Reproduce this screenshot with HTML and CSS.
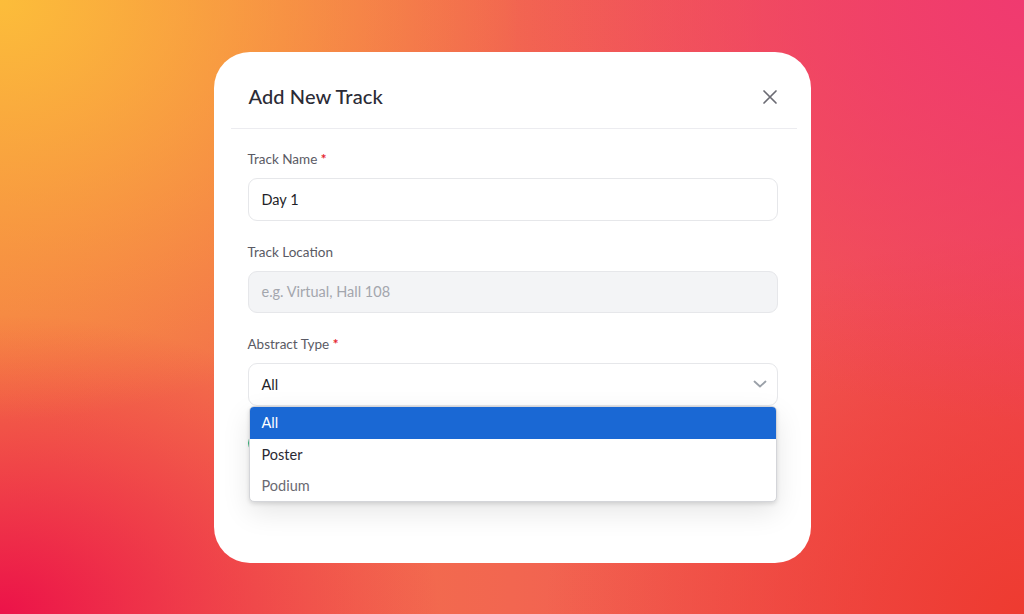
FILE: index.html
```html
<!DOCTYPE html>
<html lang="en">
<head>
<meta charset="utf-8">
<title>Add New Track</title>
<link rel="stylesheet" href="styles.css">
</head>
<body>
<div class="stage">
  <div class="modal">
    <div class="modal-header">
      <h2 class="modal-title">Add New Track</h2>
      <button class="close-btn" aria-label="Close">
        <svg width="16" height="16" viewBox="0 0 16 16"><path d="M2 2 L14 14 M14 2 L2 14" stroke="#6b6b73" stroke-width="1.7" stroke-linecap="round" fill="none"/></svg>
      </button>
    </div>
    <div class="modal-body">
      <div class="field">
        <label class="label">Track Name <span class="req">*</span></label>
        <div class="input">Day 1</div>
      </div>
      <div class="field">
        <label class="label">Track Location</label>
        <div class="input input-muted placeholder">e.g. Virtual, Hall 108</div>
      </div>
      <div class="field field-select">
        <label class="label">Abstract Type <span class="req">*</span></label>
        <div class="input select">
          <span>All</span>
          <svg class="chev" width="14" height="8" viewBox="0 0 14 8"><path d="M1.5 1.5 L7 6.5 L12.5 1.5" stroke="#9aa0a8" stroke-width="1.8" stroke-linecap="round" stroke-linejoin="round" fill="none"/></svg>
        </div>
        <div class="toggle-row">
          <span class="toggle"></span>
          <span class="toggle-label">Active</span>
        </div>
        <ul class="dropdown">
          <li class="opt opt-active">All</li>
          <li class="opt">Poster</li>
          <li class="opt opt-muted">Podium</li>
        </ul>
      </div>
    </div>
  </div>
</div>
</body>
</html>
```

FILE: styles.css
```css
* { box-sizing: border-box; }
html, body { margin: 0; padding: 0; }
body {
  width: 1024px;
  height: 614px;
  overflow: hidden;
  font-family: "Lato", "Open Sans", sans-serif;
  background:
    radial-gradient(ellipse 520px 420px at 0% 0%, #fcbd3a 0%, rgba(252,189,58,0) 100%),
    radial-gradient(ellipse 440px 300px at 0% 100%, #ec1249 0%, rgba(236,18,73,0) 100%),
    radial-gradient(ellipse 520px 420px at 100% 0%, #f03a70 0%, rgba(240,58,112,0) 100%),
    radial-gradient(ellipse 480px 380px at 100% 100%, #ee3b30 0%, rgba(238,59,48,0) 100%),
    linear-gradient(90deg, #f47a46 0%, #f26650 50%, #f04a55 100%);
}
.stage {
  width: 1024px;
  height: 614px;
  display: flex;
  align-items: center;
  justify-content: center;
}
.modal {
  width: 597px;
  height: 511px;
  background: #fff;
  border-radius: 36px;
  display: flex;
  flex-direction: column;
}
.modal-header {
  margin: 0 14px 0 17px;
  height: 77px;
  padding: 13px 18px 0 18px;
  border-bottom: 1px solid #ececf0;
  display: flex;
  align-items: center;
  justify-content: space-between;
}
.modal-title {
  margin: 0;
  font-size: 20px;
  font-weight: 500;
  color: #2b2b36;
  letter-spacing: 0.1px;
}
.close-btn {
  border: 0;
  background: none;
  padding: 0;
  width: 16px;
  height: 16px;
  margin-right: 1px;
  margin-top: 2px;
  display: flex;
}
.modal-body {
  padding: 22px 33px 0 34px;
  display: flex;
  flex-direction: column;
  gap: 23px;
}
.field {
  display: flex;
  flex-direction: column;
  gap: 11px;
}
.field-select { position: relative; }
.label {
  font-size: 13.5px;
  line-height: 16px;
  color: #5a5a64;
}
.req { color: #e5252f; font-weight: 700; }
.input {
  height: 43px;
  border: 1px solid #e6e7ea;
  border-radius: 9px;
  padding: 0 13px;
  display: flex;
  align-items: center;
  font-size: 14.5px;
  color: #1f1f28;
  background: #fff;
}
.input-muted { background: #f3f4f6; height: 42px; }
.placeholder { color: #a3a6ad; }
.select { justify-content: space-between; padding-right: 10px; }
.chev { display: block; }
.toggle-row {
  display: flex;
  align-items: center;
  gap: 10px;
  margin-top: 16px;
}
.toggle {
  width: 36px;
  height: 20px;
  border-radius: 10px;
  background: #34b77a;
}
.toggle-label { font-size: 14px; color: #333; }
.dropdown {
  position: absolute;
  left: 1px;
  right: 1px;
  top: 70px;
  margin: 0;
  padding: 0;
  list-style: none;
  background: #fff;
  border: 1px solid #d4d5d9;
  border-radius: 5px;
  overflow: hidden;
  box-shadow: 0 2px 4px rgba(0,0,0,0.12), 0 10px 28px rgba(0,0,0,0.10);
}
.opt {
  height: 31px;
  padding: 0 12px;
  display: flex;
  align-items: center;
  font-size: 14.5px;
  color: #2a2a33;
}
.opt-active { background: #1a68d4; color: #fff; height: 32px; }
.opt-muted { color: #6a6a72; }
```
